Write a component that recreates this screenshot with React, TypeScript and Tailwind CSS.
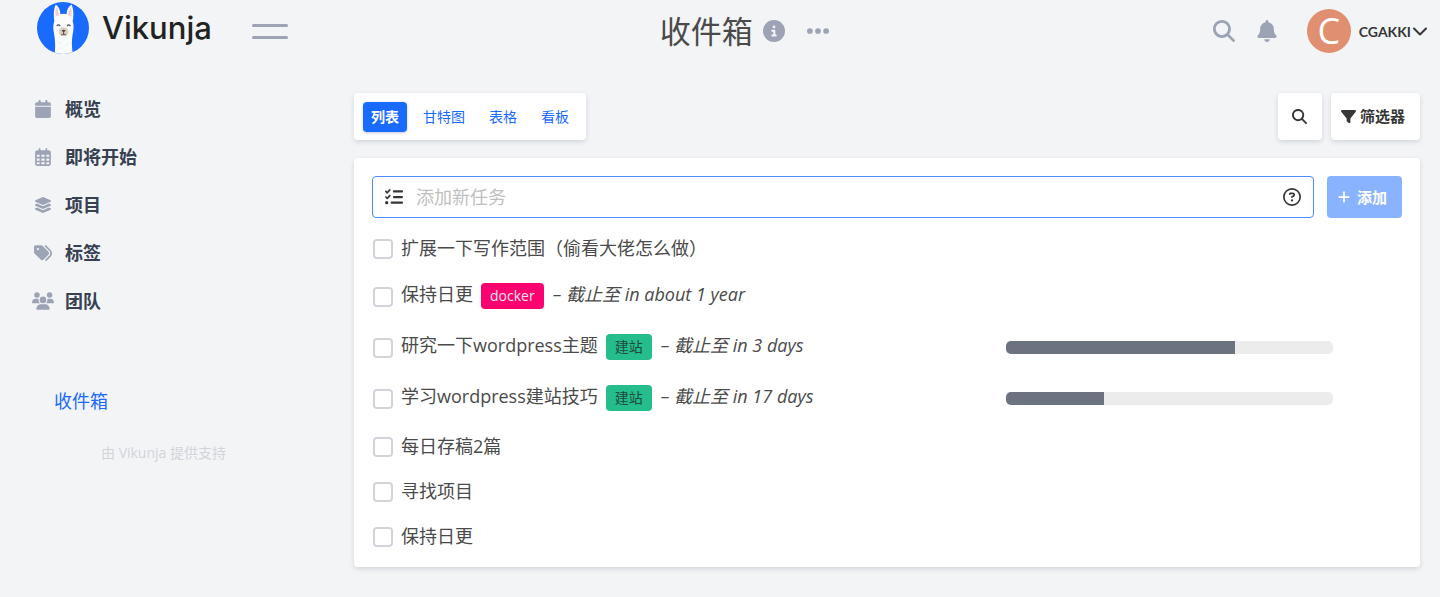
import { useState } from "react";
import {
    FaBell,
    FaCalendar,
    FaCircleInfo,
    FaEllipsis,
    FaFilter,
    FaLayerGroup,
    FaListCheck,
    FaMagnifyingGlass,
    FaPlus,
    FaRegCalendarDays,
    FaRegCircleQuestion,
    FaTags,
    FaUsers,
} from "react-icons/fa6";

const menu = [
    { label: "概览", icon: FaCalendar, size: "size-[18px]" },
    { label: "即将开始", icon: FaRegCalendarDays, size: "size-[18px]" },
    { label: "项目", icon: FaLayerGroup, size: "size-[18px]" },
    { label: "标签", icon: FaTags, size: "size-[18px]" },
    { label: "团队", icon: FaUsers, size: "size-[22px]" },
];

const views = ["列表", "甘特图", "表格", "看板"];

type Task = {
    id: number;
    title: string;
    label?: string;
    labelClass?: string;
    due?: string;
    progress?: number;
};

const tasks: Task[] = [
    { id: 1, title: "扩展一下写作范围（偷看大佬怎么做）" },
    { id: 2, title: "保持日更", label: "docker", labelClass: "bg-[#ff0070] text-gray-200", due: "in about 1 year" },
    { id: 3, title: "研究一下wordpress主题", label: "建站", labelClass: "bg-[#26bd8c] text-[#1f4a3f]", due: "in 3 days", progress: 70 },
    { id: 4, title: "学习wordpress建站技巧", label: "建站", labelClass: "bg-[#26bd8c] text-[#1f4a3f]", due: "in 17 days", progress: 30 },
    { id: 5, title: "每日存稿2篇" },
    { id: 6, title: "寻找项目" },
    { id: 7, title: "保持日更" },
];

function Llama() {
    return (
        <svg viewBox="0 0 52 52" className="size-[52px]" aria-hidden="true">
            <defs>
                <clipPath id="badge">
                    <circle cx="26" cy="26" r="26" />
                </clipPath>
            </defs>
            <circle cx="26" cy="26" r="26" fill="#196aff" />
            <g clipPath="url(#badge)">
                <path
                    d="M17.5 53c1-8 .8-14-.4-21-1-5-1.200-9 .2-13-.8-5-.8-12 1.500-16.500 3 2 4.500 6 4.700 9.700 1.700-.7 4.300-.7 6 0 .2-4 2-7.700 5-9.700 2.200 4.500 2.300 11.500 1.200 16.500 1.300 4 1 8 0 13-1.200 7-1 13 .3 21z"
                    fill="#fbfbfb"
                />
                <path d="M18.700 15c-.5-4-.2-7.500.7-9.500 1.700 2 2.300 5 2.300 8-1.200.2-2.200.7-3 1.500z" fill="#f6cdd0" />
                <path d="M34.300 15c.6-4 .4-7.500-.5-9.500-1.700 2-2.400 5-2.400 8 1.200.2 2.200.7 2.900 1.500z" fill="#f6cdd0" />
                <ellipse cx="26.600" cy="29.800" rx="4.800" ry="4.500" fill="#dccfc0" />
                <path d="M24.600 28.200c1.300-.7 2.700-.7 4 0-.3 1.200-1.200 1.700-2 1.700s-1.700-.5-2-1.700z" fill="#4b4643" />
                <path d="M26.600 29.500v2.800m-2.200.6c1.300-1 3.100-1 4.400 0" fill="none" stroke="#4b4643" strokeWidth=".9" strokeLinecap="round" />
                <path d="M20 23.800c.6-1.300 2.200-1.300 2.900 0m7.400 0c.6-1.300 2.200-1.300 2.900 0" fill="none" stroke="#4b4f59" strokeWidth="1.100" strokeLinecap="round" />
                <path d="M19.500 39c2 1.500 3.500 2 5.500 2m7-1c-1.500 2-2.500 3-4 3.500" fill="none" stroke="#ececec" strokeWidth=".8" />
            </g>
        </svg>
    );
}

function Header() {
    return (
        <header className="flex h-[62px] items-center justify-between pl-[37px] pr-3">
            <div className="flex items-center">
                <a href="#" className="flex items-center gap-[13px] pb-[6px]">
                    <Llama />
                    <span className="font-[Inter,sans-serif] text-[31px] leading-9 font-medium text-[#202322]">Vikunja</span>
                </a>
                <button type="button" aria-label="菜单" className="ml-10 flex flex-col gap-[9px]">
                    <span className="h-[3px] w-9 rounded-full bg-[#9ca3b4]"></span>
                    <span className="h-[3px] w-9 rounded-full bg-[#9ca3b4]"></span>
                </button>
            </div>

            <div className="flex items-center">
                <h1 className="text-[31px] leading-10 font-normal text-[#4a4a4a]">收件箱</h1>
                <button type="button" aria-label="信息" className="ml-[10px] text-[22px] text-[#9ca3b4]">
                    <FaCircleInfo />
                </button>
                <button type="button" aria-label="更多" className="pr-[10px] pl-5 text-[26px] text-[#9ca3b4]">
                    <FaEllipsis />
                </button>
            </div>

            <div className="flex items-center text-[22px] text-[#9ca3b4]">
                <button type="button" aria-label="搜索">
                    <FaMagnifyingGlass />
                </button>
                <button type="button" aria-label="通知" className="ml-[21px]">
                    <FaBell />
                </button>
                <button type="button" className="ml-[29px] flex items-center gap-2">
                    <span className="flex size-11 items-center justify-center rounded-full bg-[#e08f70] text-4xl text-white">C</span>
                    <span className="flex items-center gap-px text-[#363636]">
                        <span className="font-[Lato,sans-serif] text-[14px] font-bold">CGAKKI</span>
                        <svg viewBox="0 0 16 16" className="size-4" fill="none" stroke="currentColor" strokeWidth="2" strokeLinecap="round" strokeLinejoin="round" aria-hidden="true">
                            <path d="M2 5.500l6 6 6-6" />
                        </svg>
                    </span>
                </button>
            </div>
        </header>
    );
}

function Sidebar() {
    return (
        <aside className="w-[327px] shrink-0 pt-[23px]">
            <nav>
                <ul className="pl-[30px]">
                    {menu.map(({ label, icon: Icon, size }) => (
                        <li key={label}>
                            <a href="#" className="flex h-12 items-center gap-[9px] text-[18px] font-bold text-[#374151]">
                                <span className="flex w-[26px] justify-center text-[#9ca3b4]">
                                    <Icon className={size} />
                                </span>
                                {label}
                            </a>
                        </li>
                    ))}
                </ul>
                <a href="#" className="mt-[58px] block pl-[54px] text-[18px] leading-9 text-[#196aff]">
                    收件箱
                </a>
            </nav>
            <a href="#" className="mt-6 block text-center text-sm text-[#d1d5db]">
                由 Vikunja 提供支持
            </a>
        </aside>
    );
}

function TaskRow({ task }: { task: Task }) {
    const [done, setDone] = useState(false);
    const id = `task-${task.id}`;

    return (
        <li className={task.label ? "flex h-[51px] items-center" : "flex h-[45px] items-center"}>
            <input
                id={id}
                type="checkbox"
                checked={done}
                onChange={(e) => setDone(e.target.checked)}
                className="ml-px size-5 shrink-0 appearance-none rounded-[4px] border-2 border-[#d1d5db] bg-white checked:bg-[#196aff]"
            />
            <label htmlFor={id} className={task.label ? "ml-2 flex flex-1 items-baseline pb-1 text-[#4a4a4a]" : "ml-2 flex flex-1 items-center text-[#4a4a4a]"}>
                {task.title}
                {task.label && (
                    <span className={`ml-2 rounded-[4px] px-[9px] text-sm leading-[26px] ${task.labelClass}`}>
                        {task.label}
                    </span>
                )}
                {task.due && <span className="ml-[9px] italic">– 截止至 {task.due}</span>}
            </label>
            {task.progress !== undefined && (
                <div className="mr-[69px] h-[13px] w-[327px] overflow-hidden rounded-[5px] bg-[#ececec]">
                    <div className="h-full bg-[#6b7280]" style={{ width: `${task.progress}%` }}></div>
                </div>
            )}
        </li>
    );
}

export default function App() {
    const [view, setView] = useState("列表");
    const [text, setText] = useState("");

    return (
        <div className="min-h-screen bg-[#f3f4f6] font-['Open_Sans','Noto_Sans_CJK_SC',sans-serif] text-[#363636]">
            <Header />
            <div className="flex">
                <Sidebar />
                <main className="min-w-0 flex-1 pt-[31px] pr-5 pb-[30px] pl-[27px]">
                    <div className="flex items-center justify-between">
                        <div className="flex h-[47px] items-center gap-2 rounded-[4px] bg-white px-[9px] shadow-[0_2px_5px_#d1d5db]">
                            {views.map((v) => (
                                <button
                                    key={v}
                                    type="button"
                                    onClick={() => setView(v)}
                                    className={
                                        v === view
                                            ? "h-[30px] rounded-[4px] bg-[#196aff] px-2 text-sm font-bold text-white shadow-[0_1px_3px_#c4cad4]"
                                            : "h-[30px] rounded-[4px] px-2 text-sm text-[#196aff]"
                                    }
                                >
                                    {v}
                                </button>
                            ))}
                        </div>
                        <div className="flex gap-[9px]">
                            <button type="button" aria-label="搜索" className="flex h-[47px] w-11 items-center justify-center rounded-[4px] bg-white shadow-[0_2px_5px_#d1d5db]">
                                <FaMagnifyingGlass className="text-[15px]" />
                            </button>
                            <button type="button" className="flex h-[47px] items-center gap-1 rounded-[4px] bg-white pr-[15px] pl-[10px] text-[15px] font-bold shadow-[0_2px_5px_#d1d5db]">
                                <FaFilter />
                                筛选器
                            </button>
                        </div>
                    </div>

                    <section className="mt-[18px] rounded-[4px] bg-white px-[18px] pt-[18px] pb-2 text-[18px] shadow-[0_2px_5px_#d1d5db]">
                        <form className="flex gap-[13px]" onSubmit={(e) => e.preventDefault()}>
                            <div className="flex h-[42px] flex-1 items-center rounded-[4px] border border-[#4b8cff] px-3">
                                <FaListCheck className="shrink-0 text-[18px]" />
                                <input
                                    type="text"
                                    aria-label="添加新任务"
                                    placeholder="添加新任务"
                                    value={text}
                                    onChange={(e) => setText(e.target.value)}
                                    className="ml-[13px] min-w-0 flex-1 bg-transparent outline-none placeholder:text-[#bfbfbf]"
                                />
                                <button type="button" aria-label="帮助" className="shrink-0 text-[18px]">
                                    <FaRegCircleQuestion />
                                </button>
                            </div>
                            <button type="submit" disabled={text === ""} className="flex h-[42px] items-center gap-[6px] rounded-[4px] bg-[#196aff] pr-[15px] pl-[10px] font-bold text-white disabled:bg-[#8ab3ff]">
                                <FaPlus className="text-sm" />
                                <span className="text-[15px]">添加</span>
                            </button>
                        </form>
                        <ul className="mt-2">
                            {tasks.map((task) => (
                                <TaskRow key={task.id} task={task} />
                            ))}
                        </ul>
                    </section>
                </main>
            </div>
        </div>
    );
}
